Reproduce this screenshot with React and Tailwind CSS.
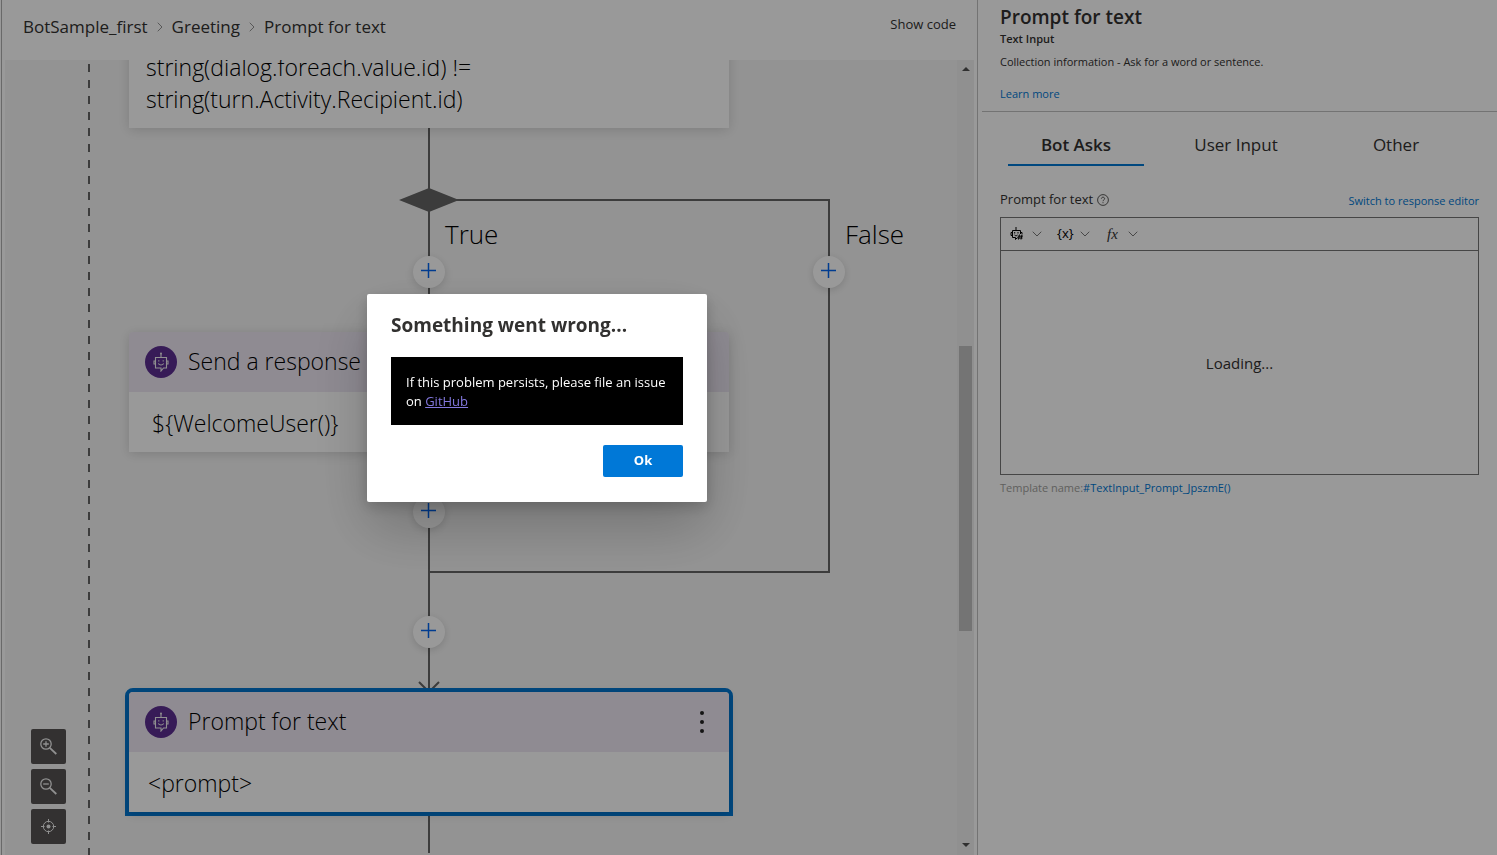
import { ChevronDown, ChevronRight } from 'lucide-react'

const BotIcon = ({ className }) => (
    <svg viewBox="0 0 16 20" className={className} fill="none" stroke="currentColor" strokeWidth="1.1">
        <path d="M8 2v3.500M2.500 5.500h11v10.500H10.500l-2.500 3v-3h-5.500z" />
        <path d="M2.500 9H1v3h1.500M13.500 9H15v3h-1.500" />
        <path d="M5.300 11.500c1.300 2 4.100 2 5.400 0" />
        <path d="M5.800 8.200v1.400M10.200 8.200v1.400" />
        <circle cx="8" cy="1.600" r="1" fill="currentColor" stroke="none" />
    </svg>
)

const BotEditIcon = () => (
    <svg viewBox="0 0 14 14" className="size-[14px]" fill="none" stroke="currentColor" strokeWidth="1">
        <path d="M6 0v3M7.500 10.500L5.500 12.500v-2h-3v-7h8v3.500M2.500 5.500h-1.500v3h1.500M10.500 5.500h1.500v1.500" />
        <path d="M4.700 5v1.500M8 5v1.500M4.500 8c1 1 2 1 3 0" />
        <path d="M8.500 12.500l1-5M11 12.500l1-5M7.800 9.200h5M7.500 11h5" />
    </svg>
)

const AddButton = ({ className }) => (
    <button aria-label="Add" className={`absolute size-8 rounded-full bg-white shadow-[0_2px_8px_rgba(0,0,0,0.15)] flex pl-2 pt-[7px] ${className}`}>
        <svg viewBox="0 0 15 15" className="size-[15px]" fill="none" stroke="#0064f0">
            <path d="M0 7.500h15M7.500 0v15" strokeWidth="1.500" />
        </svg>
    </button>
)

const ActionCard = ({ title, body, selected, className }) => (
    <div className={`absolute w-[608px] border-4 rounded-t-lg ${selected ? "border-[#0078d4]" : "border-transparent"} ${className}`}>
        <div className="rounded-t-sm shadow-[0_2px_12px_rgba(0,0,0,0.15)]">
            <div className="h-[60px] bg-[#eee8f4] rounded-t-sm flex items-center px-4">
                <span className="size-8 rounded-full bg-[#5c2e91] text-[#f0f0f0] flex items-center justify-center">
                    <BotIcon className="w-4 h-5" />
                </span>
                <h3 className="ml-[11px] text-[23px] font-light flex-1 pb-0.5">{title}</h3>
                {selected && (
                    <button aria-label="More actions" className="flex flex-col gap-[5px] mr-[9px]">
                        <span className="size-1 rounded-full bg-[#222]"></span>
                        <span className="size-1 rounded-full bg-[#222]"></span>
                        <span className="size-1 rounded-full bg-[#222]"></span>
                    </button>
                )}
            </div>
            <div className="h-[60px] bg-white flex items-center px-[19px] pt-0.5 text-[23px] font-light">{body}</div>
        </div>
    </div>
)

const ZoomControls = () => (
    <div className="absolute left-[26px] bottom-[11px] flex flex-col gap-[5px] text-[#f0f0f0]">
        <button aria-label="Zoom in" className="size-[35px] rounded-xs bg-[#555252] flex items-center justify-center">
            <svg viewBox="0 0 17 17" className="size-[17px]" fill="none" stroke="currentColor" strokeWidth="1.300">
                <circle cx="6" cy="6" r="5.200" />
                <path d="M3.200 6h5.600M6 3.200v5.600" />
                <path d="M9.800 9.800l6.500 6.200" strokeWidth="1.800" />
            </svg>
        </button>
        <button aria-label="Zoom out" className="size-[35px] rounded-xs bg-[#555252] flex items-center justify-center">
            <svg viewBox="0 0 17 17" className="size-[17px]" fill="none" stroke="currentColor" strokeWidth="1.300">
                <circle cx="6" cy="6" r="5.200" />
                <path d="M3.200 6h5.600" />
                <path d="M9.800 9.800l6.500 6.200" strokeWidth="1.800" />
            </svg>
        </button>
        <button aria-label="Reset view" className="size-[35px] rounded-xs bg-[#555252] flex items-center justify-center">
            <svg viewBox="0 0 15 15" className="size-[15px]" fill="none" stroke="currentColor">
                <circle cx="7.500" cy="7.500" r="5.200" />
                <circle cx="7.500" cy="7.500" r="2" fill="currentColor" stroke="none" />
                <path d="M7.500 0v3.500M7.500 11.500V15M0 7.500h3.500M11.500 7.500H15" />
            </svg>
        </button>
    </div>
)

const FlowCanvas = () => (
    <div className="flex-1 relative overflow-hidden bg-[#f6f6f6] text-black">
        <svg className="absolute inset-0 w-full h-full" fill="none" stroke="#656565" strokeWidth="2">
            <path d="M84 4V800" strokeDasharray="8 8" />
            <path d="M424 68V632M424 140H824V512H424M424 756V793" />
            <path d="M414 622l10 10l10-10" />
            <path d="M394 140l30-12l30 12l-30 12z" fill="#656565" stroke="none" />
        </svg>

        <div className="absolute left-[124px] -top-6 w-[600px] bg-white px-[17px] pt-[15px] pb-[13px] text-[23px] font-light leading-8 shadow-[0_2px_12px_rgba(0,0,0,0.15)]">
            <p>{"string(dialog.foreach.value.id) !="}</p>
            <p>{"string(turn.Activity.Recipient.id)"}</p>
        </div>

        <span className="absolute left-[440px] top-[158px] text-[26px] leading-8 font-light">True</span>
        <span className="absolute left-[840px] top-[158px] text-[26px] leading-8 font-light">False</span>

        <ActionCard title="Send a response" body={<span className="pl-1">{"${WelcomeUser()}"}</span>} className="left-[120px] top-[268px]" />
        <ActionCard title="Prompt for text" body="<prompt>" selected className="left-[120px] top-[628px]" />

        <AddButton className="left-[408px] top-[196px]" />
        <AddButton className="left-[808px] top-[196px]" />
        <AddButton className="left-[408px] top-[436px]" />
        <AddButton className="left-[408px] top-[556px]" />

        <ZoomControls />
    </div>
)

const ScrollBar = () => (
    <div className="w-[17px] mr-[3px] bg-[#f1f1f1] flex flex-col items-center justify-between pt-[7px] pb-2">
        <div className="w-0 border-x-4 border-x-transparent border-b-4 border-b-[#505050]"></div>
        <div className="w-[13px] h-[285px] mt-[62px] bg-[#c1c1c1]"></div>
        <div className="w-0 border-x-4 border-x-transparent border-t-4 border-t-[#505050]"></div>
    </div>
)

const PropertyPanel = () => (
    <aside className="w-[520px] shrink-0 border-l border-[#c0c0c0] flex flex-col">
        <header className="ml-1 pl-[18px] pt-1 h-[112px] border-b border-[#c0c0c0]">
            <h2 className="text-[19px] leading-[26px] font-semibold">Prompt for text</h2>
            <p className="text-[11px] leading-[18px] font-semibold">Text Input</p>
            <p className="text-[11px] leading-4 mt-1.5">Collection information - Ask for a word or sentence.</p>
            <a href="#" className="block w-fit text-[11px] leading-4 mt-4 text-[#0078d4]">Learn more</a>
        </header>

        <div role="tablist" className="flex pl-[18px] mt-3">
            <button role="tab" aria-selected="true" className="w-[136px] mx-3 h-[42px] pt-0.5 text-[17px] font-semibold border-b-2 border-[#0078d4]">Bot Asks</button>
            <button role="tab" aria-selected="false" className="w-[136px] mx-3 h-[42px] pt-0.5 text-[17px] border-b-2 border-transparent">User Input</button>
            <button role="tab" aria-selected="false" className="w-[136px] mx-3 h-[42px] pt-0.5 text-[17px] border-b-2 border-transparent">Other</button>
        </div>

        <div className="pl-[22px] pr-[18px] mt-6">
            <div className="flex items-center justify-between h-5 mb-[7px]">
                <span className="flex items-center gap-1 text-[13px]">
                    Prompt for text
                    <svg viewBox="0 0 12 12" className="size-3" fill="none" stroke="currentColor" strokeWidth="0.800">
                        <circle cx="6" cy="6" r="5.400" />
                        <path d="M4.400 4.700c0-2 3.200-2 3.200 0c0 1.200-1.600 1.200-1.600 2.500M6 8.200v1" />
                    </svg>
                </span>
                <a href="#" className="text-[11px] leading-4 text-[#0078d4] mt-0.5">Switch to response editor</a>
            </div>

            <div className="border border-[#757575]">
                <div className="h-[33px] border-b border-[#757575] flex items-center pl-[9px] text-black">
                    <button aria-label="Insert template" className="flex items-center justify-between w-[35px] mr-3">
                        <BotEditIcon />
                        <ChevronDown className="size-4 text-[#555]" strokeWidth={1.2} />
                    </button>
                    <button aria-label="Insert property" className="flex items-center justify-between w-9 mr-3 text-[13px]">
                        {"{x}"}
                        <ChevronDown className="size-4 text-[#555]" strokeWidth={1.2} />
                    </button>
                    <button aria-label="Insert function" className="flex items-center justify-between w-9 pl-0.5 text-[15px] italic text-[#333] font-['Liberation_Serif',serif]">
                        fx
                        <ChevronDown className="size-4 text-[#555]" strokeWidth={1.2} />
                    </button>
                </div>
                <div className="h-[223px] flex items-center justify-center pt-0.5 text-[15px]">Loading...</div>
            </div>
            <p className="text-[11px] leading-4 mt-[5px] text-[#a19f9d]">
                Template name:<a href="#" className="text-[#0078d4]">#TextInput_Prompt_JpszmE()</a>
            </p>
        </div>
    </aside>
)

const ErrorDialog = () => (
    <div className="fixed inset-0 bg-black/40 flex items-center justify-center pr-[423px] pb-[59px]">
        <div role="dialog" aria-labelledby="dialog-title" className="w-[340px] rounded-xs bg-white px-6 pt-4 pb-[25px] shadow-[0_26px_58px_rgba(0,0,0,0.22),0_5px_14px_rgba(0,0,0,0.18)]">
            <h2 id="dialog-title" className="text-[19px] leading-[30px] font-bold">Something went wrong...</h2>
            <div className="mt-[17px] bg-black text-white px-[15px] pt-4 pb-3.5 text-[13px] leading-[19px] font-medium">
                If this problem persists, please file an issue on <a href="#" className="text-[#8378de] underline font-normal">GitHub</a>
            </div>
            <div className="flex justify-end mt-5">
                <button className="w-20 h-8 rounded-xs bg-[#0078d7] text-white text-[13px] font-bold">Ok</button>
            </div>
        </div>
    </div>
)

const App = () => {
    return (
        <div className="h-dvh w-full flex overflow-hidden bg-white text-[#323130] font-['Open_Sans',sans-serif]">
            <main className="flex-1 min-w-0 flex flex-col ml-px border-l border-[#b0b0b0]">
                <header className="h-[60px] shrink-0 flex items-center justify-between pl-[21px] pr-[21px] pb-[6px]">
                    <nav className="flex items-center gap-1 text-[17px]">
                        <a href="#">BotSample_first</a>
                        <ChevronRight className="size-4 text-[#777]" strokeWidth={1.2} />
                        <a href="#">Greeting</a>
                        <ChevronRight className="size-4 text-[#777]" strokeWidth={1.2} />
                        <a href="#">Prompt for text</a>
                    </nav>
                    <button className="text-[13px] pb-1">Show code</button>
                </header>
                <div className="flex-1 min-h-0 flex ml-[3px]">
                    <FlowCanvas />
                    <ScrollBar />
                </div>
            </main>
            <PropertyPanel />
            <ErrorDialog />
        </div>
    )
};

export default App
